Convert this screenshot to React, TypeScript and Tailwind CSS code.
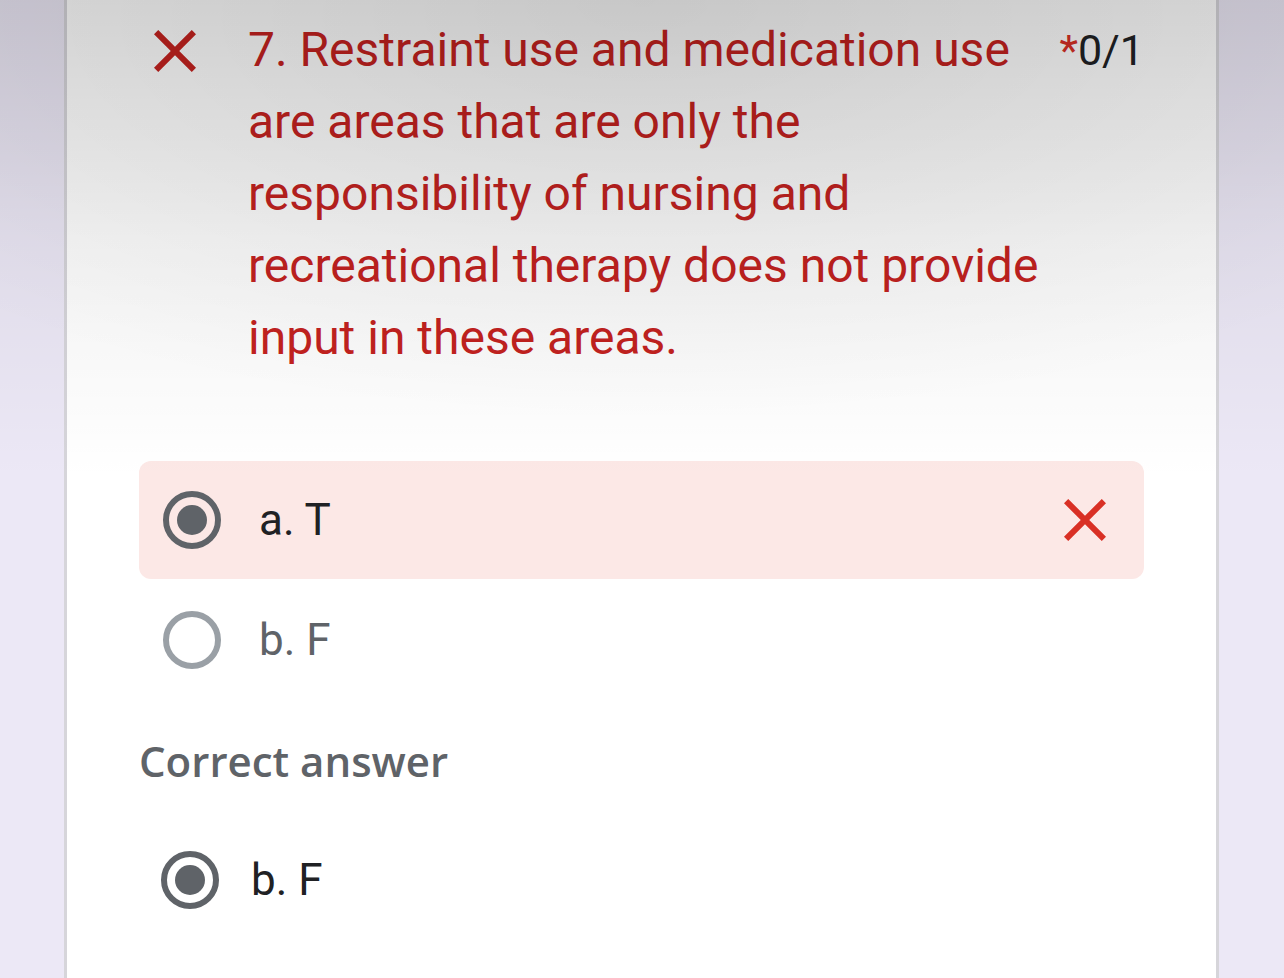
import React from 'react'

function CloseIcon({ className = '' }: { className?: string }) {
  return (
    <svg viewBox="0 0 24 24" className={className} fill="currentColor">
      <path d="M19 6.41 17.59 5 12 10.59 6.41 5 5 6.41 10.59 12 5 17.59 6.41 19 12 13.41 17.59 19 19 17.59 13.41 12z" />
    </svg>
  )
}

function Radio({ checked, muted = false }: { checked: boolean; muted?: boolean }) {
  return (
    <span
      className={`flex h-[58px] w-[58px] shrink-0 items-center justify-center rounded-full border-[6px] ${
        muted ? 'border-[#9aa0a6]' : 'border-[#5f6368]'
      }`}
    >
      {checked && <span className="h-[30px] w-[30px] rounded-full bg-[#5f6368]" />}
    </span>
  )
}

const lines = [
  '7. Restraint use and medication use',
  'are areas that are only the',
  'responsibility of nursing and',
  'recreational therapy does not provide',
  'input in these areas.',
]

export default function App() {
  return (
    <div className="relative h-[978px] w-[1284px] overflow-hidden bg-[#ece8f6] font-['Roboto',sans-serif]">
      <div className="ml-[64px] h-full w-[1155px] border-x-[3px] border-[#d6d5da] bg-white px-[72px]">
        {/* question header */}
        <div className="flex pt-[14px]">
          <CloseIcon className="mt-[1px] h-[72px] w-[72px] shrink-0 text-[#c5221f]" />
          <div className="ml-[37px] flex-1 text-[48px] leading-[72px] text-[#c5221f]">
            {lines.map((l) => (
              <div key={l}>{l}</div>
            ))}
          </div>
          <div className="text-[43px] leading-[72px] text-[#202124]">
            <span className="text-[#d93025]">*</span>0/1
          </div>
        </div>

        {/* options */}
        <div className="mt-[87px] flex h-[118px] items-center rounded-[12px] bg-[#fce8e6] pl-[24px] pr-[23px]">
          <Radio checked />
          <span className="ml-[38px] flex-1 text-[44px] text-[#202124]">a. T</span>
          <CloseIcon className="h-[72px] w-[72px] text-[#d93025]" />
        </div>
        <div className="flex h-[122px] items-center pl-[24px]">
          <Radio checked={false} muted />
          <span className="ml-[38px] text-[44px] text-[#5f6368]">b. F</span>
        </div>

        <div className="mt-[36px] font-['Open_Sans',sans-serif] text-[42px] font-semibold leading-[48px] text-[#5f6368]">
          Correct answer
        </div>

        <div className="mt-[62px] flex items-center pl-[22px]">
          <Radio checked />
          <span className="ml-[32px] text-[44px] text-[#202124]">b. F</span>
        </div>
      </div>

      {/* top shade */}
      <div className="pointer-events-none absolute inset-x-0 top-0 h-[480px] bg-[radial-gradient(ellipse_1000px_420px_at_50%_0%,rgba(0,0,0,0.09),transparent),linear-gradient(to_bottom,rgba(0,0,0,0.14),rgba(0,0,0,0.05)_50%,transparent)]" />
    </div>
  )
}
